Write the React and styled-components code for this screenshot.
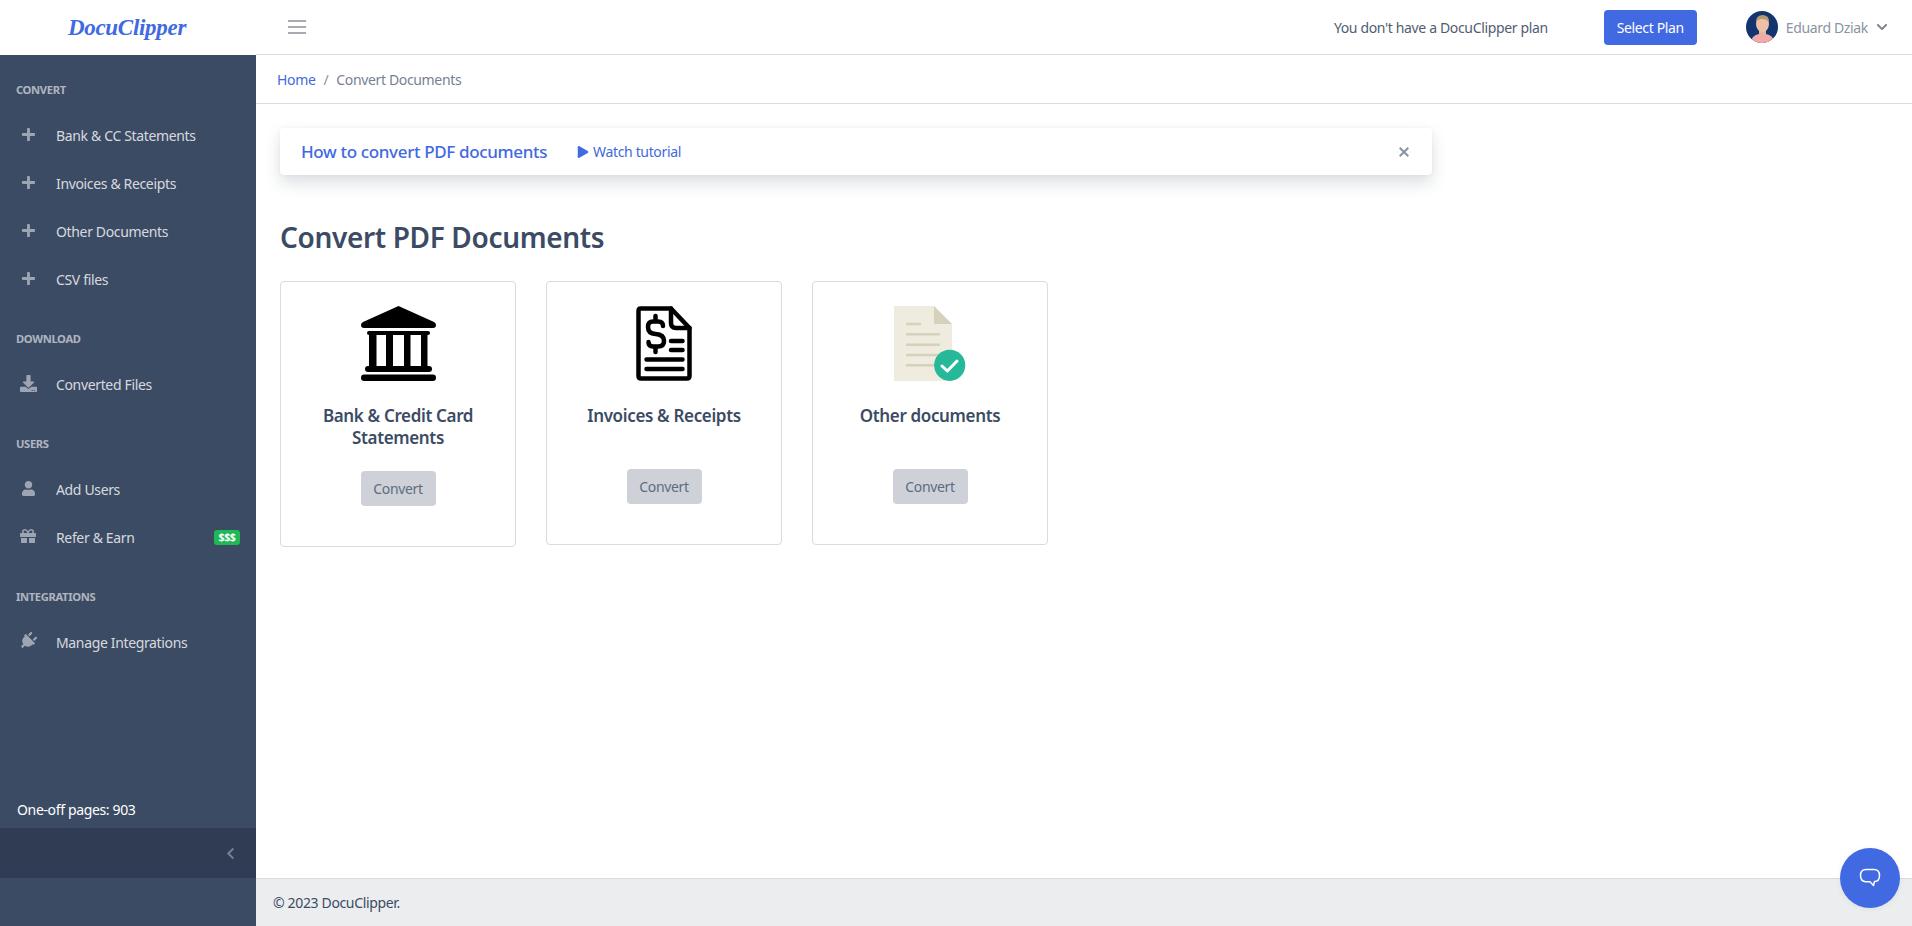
import React from 'react';
import styled, { createGlobalStyle } from 'styled-components';
import {
    FaPlus,
    FaDownload,
    FaUser,
    FaGift,
    FaPlug,
    FaChevronLeft,
    FaChevronDown,
    FaPlay
} from 'react-icons/fa';

const BLUE = '#4169e1';
const NAVY = '#3c4b64';

const GlobalStyle = createGlobalStyle`
    html, body {
        margin: 0;
        height: 100%;
        background: #fff;
    }
    body {
        font-family: "Noto Sans", "Open Sans", sans-serif;
        font-size: 14px;
        letter-spacing: -0.35px;
        color: ${NAVY};
    }
    * {
        box-sizing: border-box;
    }
`;

const NAV = [
    {
        title: 'Convert',
        items: [
            { icon: <FaPlus size={15} />, label: 'Bank & CC Statements' },
            { icon: <FaPlus size={15} />, label: 'Invoices & Receipts' },
            { icon: <FaPlus size={15} />, label: 'Other Documents' },
            { icon: <FaPlus size={15} />, label: 'CSV files' }
        ]
    },
    {
        title: 'Download',
        items: [{ icon: <FaDownload size={17} />, label: 'Converted Files' }]
    },
    {
        title: 'Users',
        items: [
            { icon: <FaUser size={15} />, label: 'Add Users' },
            { icon: <FaGift size={16} />, label: 'Refer & Earn', badge: '$$$' }
        ]
    },
    {
        title: 'Integrations',
        items: [{ icon: <PlugIcon />, label: 'Manage Integrations' }]
    }
];

function PlugIcon() {
    return <RotatedPlug size={18} />;
}

const BankIcon = () => (
    <svg width="75" height="75" viewBox="0 0 75 75" fill="#000">
        <path d="M37.5 0 L73 16 Q75 17 75 19 Q75 22 72 22 L3 22 Q0 22 0 19 Q0 17 2 16 Z" />
        <rect x="6" y="25" width="63" height="4" rx="2" />
        <rect x="8" y="28" width="7.5" height="33" />
        <rect x="25" y="28" width="7" height="33" />
        <rect x="43" y="28" width="6.5" height="33" />
        <rect x="60" y="28" width="6.5" height="33" />
        <rect x="4" y="60" width="67" height="6" rx="3" />
        <rect x="0" y="68.5" width="75" height="6.5" rx="3.2" />
    </svg>
);

const InvoiceIcon = () => (
    <svg
        width="56"
        height="75"
        viewBox="0 0 56 75"
        fill="none"
        stroke="#000"
        strokeWidth="4.5"
        strokeLinecap="round"
        strokeLinejoin="round"
    >
        <path d="M4.5 2.5 H35 L53.5 22 V70 Q53.5 72.5 51 72.5 H5 Q2.5 72.5 2.5 70 V5 Q2.5 2.5 4.5 2.5 Z" />
        <path d="M35 2.5 V17 Q35 22 40 22 H53.5" />
        <path d="M27 20 Q27 15.5 22 15.5 H17 Q12 15.5 12 21 Q12 27.5 19.5 28 Q28 28.5 28 35 Q28 40.5 22 40.5 H17 Q12.5 40.5 12.5 36" />
        <path d="M19.5 10 V15 M19.5 41 V46" />
        <path d="M35 35 H46.5 M35 44 H46.5 M10.5 53.5 H46.5 M10.5 63 H46.5" />
    </svg>
);

const DocCheckIcon = () => (
    <svg width="72" height="75" viewBox="0 0 72 75">
        <path d="M0 0 H40 L58 18 V75 H0 Z" fill="#efebde" />
        <path d="M40 0 L58 18 H40 Z" fill="#d6d1bc" />
        <path
            d="M12 18 H27 M12 28.3 H46 M12 38.7 H46 M12 49 H46 M12 59.3 H46"
            stroke="#d6d1bc"
            strokeWidth="2.5"
        />
        <circle cx="55.7" cy="59.3" r="15.6" fill="#26b999" />
        <path
            d="M48 60 L53.3 65 L63 55"
            fill="none"
            stroke="#fff"
            strokeWidth="3"
            strokeLinecap="round"
            strokeLinejoin="round"
        />
    </svg>
);

const MenuIcon = () => (
    <svg width="18" height="14" viewBox="0 0 18 14" stroke="#8a8f98" strokeWidth="1.4">
        <path d="M0 1 H18 M0 7 H18 M0 13 H18" />
    </svg>
);

const CloseIcon = () => (
    <svg width="10" height="10" viewBox="0 0 10 10" stroke="#8a93a2" strokeWidth="2">
        <path d="M0.7 0.7 L9.3 9.3 M9.3 0.7 L0.7 9.3" />
    </svg>
);

const ChatIcon = () => (
    <svg
        width="22"
        height="20"
        viewBox="0 0 22 20"
        fill="none"
        stroke="#fff"
        strokeWidth="1.5"
        strokeLinejoin="round"
    >
        <path d="M7 1.5 H15 Q20.5 1.5 20.5 7.5 Q20.5 13.5 15.5 13.5 L14.5 17.5 L11 13.8 H7 Q1.5 13.5 1.5 7.5 Q1.5 1.5 7 1.5 Z" />
    </svg>
);

const Avatar = () => (
    <svg width="32" height="32" viewBox="0 0 32 32">
        <defs>
            <clipPath id="avatar-clip">
                <circle cx="16" cy="16" r="16" />
            </clipPath>
        </defs>
        <g clipPath="url(#avatar-clip)">
            <rect width="32" height="32" fill="#12346f" />
            <path d="M4 32 Q6 24 13 23 H20 Q27 24 29 32 Z" fill="#f2a9a9" />
            <rect x="13" y="18" width="7" height="7" fill="#e6b39c" />
            <ellipse cx="16.5" cy="13" rx="6.5" ry="8" fill="#eec0a8" />
            <path d="M10 11 Q10 4 17 4 Q23.5 4.5 23 11 Q20 7.5 16 8 Q12 8 10 11 Z" fill="#b49a6c" />
        </g>
    </svg>
);

const CARDS = [
    { icon: <BankIcon />, title: 'Bank & Credit Card Statements' },
    { icon: <InvoiceIcon />, title: 'Invoices & Receipts' },
    { icon: <DocCheckIcon />, title: 'Other documents' }
];

export default function App() {
    return (
        <Root>
            <GlobalStyle />
            <Header>
                <LogoArea>
                    <Logo>DocuClipper</Logo>
                </LogoArea>
                <HeaderBar>
                    <MenuButton>
                        <MenuIcon />
                    </MenuButton>
                    <PlanNote>You don't have a DocuClipper plan</PlanNote>
                    <SelectPlan>Select Plan</SelectPlan>
                    <UserMenu>
                        <Avatar />
                        <UserName>Eduard Dziak</UserName>
                        <FaChevronDown size={12} color="#7c8290" />
                    </UserMenu>
                </HeaderBar>
            </Header>
            <Body>
                <Sidebar>
                    <Nav>
                        {NAV.map(section => (
                            <NavSection key={section.title}>
                                <NavTitle>{section.title}</NavTitle>
                                {section.items.map(item => (
                                    <NavItem key={item.label}>
                                        <NavIcon>{item.icon}</NavIcon>
                                        {item.label}
                                        {item.badge && <Badge>{item.badge}</Badge>}
                                    </NavItem>
                                ))}
                            </NavSection>
                        ))}
                    </Nav>
                    <Pages>One-off pages: 903</Pages>
                    <Minimizer>
                        <FaChevronLeft size={13} />
                    </Minimizer>
                    <SidebarEnd />
                </Sidebar>
                <Main>
                    <Breadcrumb>
                        <Crumb href="#">Home</Crumb>
                        <CrumbSep>/</CrumbSep>
                        <CrumbCurrent>Convert Documents</CrumbCurrent>
                    </Breadcrumb>
                    <Content>
                        <Banner>
                            <BannerTitle>How to convert PDF documents</BannerTitle>
                            <Watch>
                                <FaPlay size={12} />
                                Watch tutorial
                            </Watch>
                            <Close>
                                <CloseIcon />
                            </Close>
                        </Banner>
                        <Heading>Convert PDF Documents</Heading>
                        <Cards>
                            {CARDS.map(card => (
                                <Card key={card.title}>
                                    <CardIcon>{card.icon}</CardIcon>
                                    <CardTitle>{card.title}</CardTitle>
                                    <ConvertButton>Convert</ConvertButton>
                                </Card>
                            ))}
                        </Cards>
                    </Content>
                    <Footer>© 2023 DocuClipper.</Footer>
                </Main>
            </Body>
            <ChatButton>
                <ChatIcon />
            </ChatButton>
        </Root>
    );
}

const Root = styled.div`
    display: flex;
    flex-direction: column;
    height: 100vh;
    overflow: hidden;
`;

const Header = styled.header`
    display: flex;
    height: 55px;
    flex-shrink: 0;
`;

const LogoArea = styled.div`
    width: 256px;
    display: flex;
    align-items: center;
    justify-content: center;
    padding-right: 2px;
`;

const Logo = styled.div`
    font-family: "Liberation Serif", serif;
    font-style: italic;
    font-weight: 700;
    font-size: 23px;
    letter-spacing: -0.3px;
    color: ${BLUE};
`;

const HeaderBar = styled.div`
    flex: 1;
    display: flex;
    align-items: center;
    padding: 0 24px 0 32px;
    border-bottom: 1px solid #d8dbe0;
`;

const MenuButton = styled.div`
    display: flex;
    margin-right: auto;
`;

const PlanNote = styled.span`
    color: #4f5d73;
    margin-right: 56px;
`;

const SelectPlan = styled.button`
    width: 93px;
    height: 35px;
    border: none;
    border-radius: 4px;
    background: ${BLUE};
    color: #fff;
    font: inherit;
    letter-spacing: inherit;
    margin-right: 49px;
`;

const UserMenu = styled.div`
    display: flex;
    align-items: center;
`;

const UserName = styled.span`
    color: #8a93a2;
    margin: 0 8px;
`;

const Body = styled.div`
    flex: 1;
    display: flex;
    min-height: 0;
`;

const Sidebar = styled.aside`
    width: 256px;
    flex-shrink: 0;
    display: flex;
    flex-direction: column;
    background: ${NAVY};
    color: rgba(255, 255, 255, 0.8);
`;

const Nav = styled.nav`
    flex: 1;
    padding-top: 25px;
`;

const NavSection = styled.div`
    & + & {
        margin-top: 25.5px;
    }
`;

const NavTitle = styled.div`
    height: 20px;
    line-height: 20px;
    margin-bottom: 11.5px;
    padding-left: 16px;
    font-size: 11.2px;
    font-weight: 700;
    text-transform: uppercase;
    color: rgba(255, 255, 255, 0.6);
`;

const NavItem = styled.div`
    height: 48px;
    display: flex;
    align-items: center;
    padding-right: 16px;
`;

const NavIcon = styled.span`
    width: 56px;
    flex-shrink: 0;
    display: flex;
    justify-content: center;
    padding-bottom: 3px;
    color: rgba(255, 255, 255, 0.5);
`;

const RotatedPlug = styled(FaPlug)`
    transform: rotate(45deg);
`;

const Badge = styled.span`
    margin-left: auto;
    width: 26px;
    height: 15px;
    line-height: 15px;
    border-radius: 3px;
    background: #1eb854;
    color: #fff;
    font-size: 10.5px;
    font-weight: 700;
    text-align: center;
`;

const Pages = styled.div`
    padding: 0 0 8px 17px;
    line-height: 20px;
    color: #fff;
`;

const Minimizer = styled.div`
    height: 50px;
    display: flex;
    align-items: center;
    justify-content: flex-end;
    padding-right: 19px;
    background: #303c54;
    color: rgba(255, 255, 255, 0.35);
`;

const SidebarEnd = styled.div`
    height: 48px;
`;

const Main = styled.main`
    flex: 1;
    display: flex;
    flex-direction: column;
    min-width: 0;
`;

const Breadcrumb = styled.nav`
    height: 49px;
    flex-shrink: 0;
    display: flex;
    align-items: center;
    padding-left: 21px;
    border-bottom: 1px solid #d8dbe0;
`;

const Crumb = styled.a`
    color: ${BLUE};
    text-decoration: none;
`;

const CrumbSep = styled.span`
    margin: 0 8px;
    color: #8a93a2;
`;

const CrumbCurrent = styled.span`
    color: #768192;
`;

const Content = styled.div`
    flex: 1;
    padding: 24px;
`;

const Banner = styled.div`
    width: 1152px;
    height: 47px;
    display: flex;
    align-items: center;
    padding: 0 23px 0 21px;
    border-radius: 4px;
    background: #fff;
    box-shadow: 0 8px 16px rgba(60, 75, 100, 0.18), 0 0 4px rgba(60, 75, 100, 0.05);
`;

const BannerTitle = styled.h2`
    margin: 0 30px 0 0;
    font-size: 17px;
    font-weight: 500;
    color: ${BLUE};
`;

const Watch = styled.a`
    display: flex;
    align-items: center;
    gap: 4px;
    color: ${BLUE};
`;

const Close = styled.span`
    margin-left: auto;
    display: flex;
`;

const Heading = styled.h1`
    margin: 45px 0 27px;
    font-size: 28px;
    line-height: 34px;
    font-weight: 600;
    color: ${NAVY};
`;

const Cards = styled.div`
    display: flex;
    align-items: flex-start;
    gap: 30px;
`;

const Card = styled.section`
    width: 236px;
    display: flex;
    flex-direction: column;
    align-items: center;
    padding: 24px 16px 40px;
    border: 1px solid #d8dbe0;
    border-radius: 4px;
`;

const CardIcon = styled.div`
    height: 75px;
    display: flex;
`;

const CardTitle = styled.h3`
    min-height: 41px;
    margin: 24px 0 23px;
    font-size: 17px;
    line-height: 21.6px;
    font-weight: 600;
    text-align: center;
    color: ${NAVY};
`;

const ConvertButton = styled.button`
    width: 75px;
    height: 35px;
    border: none;
    border-radius: 4px;
    background: #ced2d8;
    color: #5c6b82;
    font: inherit;
    letter-spacing: inherit;
`;

const Footer = styled.footer`
    height: 48px;
    flex-shrink: 0;
    display: flex;
    align-items: center;
    padding-left: 17px;
    background: #ebedef;
    border-top: 1px solid #d8dbe0;
`;

const ChatButton = styled.button`
    position: fixed;
    left: 1840px;
    top: 848px;
    width: 60px;
    height: 60px;
    display: flex;
    align-items: center;
    justify-content: center;
    border: none;
    border-radius: 50%;
    background: ${BLUE};
    box-shadow: 0 1px 6px rgba(0, 0, 0, 0.06);
`;
